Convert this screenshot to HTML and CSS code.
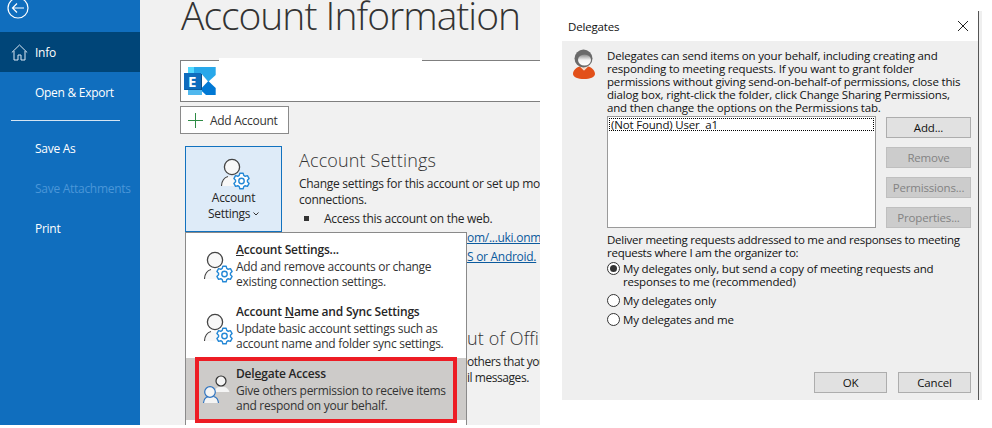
FILE: index.html
```html
<!DOCTYPE html>
<html lang="en">

<head>
    <meta charset="UTF-8">
    <title>Account Information and Delegates</title>
    <link rel="stylesheet" href="styles.css">
</head>

<body>
    <svg class="defs" width="0" height="0" aria-hidden="true">
        <symbol id="person-gear" viewBox="0 0 30 32">
            <path d="M.5 28c.3-5 2.700-8.500 6.500-9.500h6c2 .5 3 1.500 4 3V28z" fill="#f8f8f8" />
            <path d="M.5 28c.3-5 2.700-8.500 6.500-9.500" fill="none" stroke="#444" stroke-width="1.100" />
            <circle cx="11" cy="9" r="7.600" fill="#f8f8f8" stroke="#444" stroke-width="1.300" />
            <polygon transform="translate(20.500 23)" points="-2.250,-5.560 -1.660,-7.820 1.660,-7.820 2.250,-5.560 3.690,-4.730 5.950,-5.350 7.610,-2.470 5.940,-.84 5.940,.84 7.610,2.470 5.950,5.350 3.690,4.730 2.250,5.560 1.660,7.820 -1.660,7.820 -2.250,5.560 -3.690,4.730 -5.950,5.350 -7.610,2.470 -5.940,.84 -5.940,-.84 -7.610,-2.470 -5.950,-5.350 -3.690,-4.730" fill="#fff" stroke="#2488d6" stroke-width="1.400" stroke-linejoin="round" />
            <circle cx="20.500" cy="23" r="2.700" fill="none" stroke="#2488d6" stroke-width="1.400" />
        </symbol>
    </svg>

    <div class="page">
        <!-- Outlook backstage -->
        <div class="backstage">
            <nav class="sidebar">
                <div class="back">
                    <svg width="22" height="22" viewBox="0 0 22 22">
                        <circle cx="11" cy="11" r="10" fill="none" stroke="#fff" stroke-width="1.200" />
                        <path d="M17 11H5.500M10 6.500 5.500 11l4.500 4.500" fill="none" stroke="#fff" stroke-width="1.200" />
                    </svg>
                </div>
                <a class="nav-item active">
                    <svg class="home" width="17" height="17" viewBox="0 0 17 17">
                        <path d="M.8 8.500 8.500 1l7.700 7.500M3 7v9h4v-5h3v5h4V7" fill="none" stroke="#dce9f5" stroke-width="1" />
                    </svg>
                    Info
                </a>
                <a class="nav-item">Open &amp; Export</a>
                <div class="nav-line"></div>
                <a class="nav-item">Save As</a>
                <a class="nav-item disabled">Save Attachments</a>
                <a class="nav-item">Print</a>
            </nav>

            <main class="content">
                <h1>Account Information</h1>

                <div class="account-box">
                    <svg width="33" height="30" viewBox="0 0 33 30">
                        <path d="M4 0h14v7H4z" fill="#50d9ff" />
                        <path d="M10 0h8v8h-8z" fill="#28a8ea" />
                        <path d="M17.700 0h14v8l-7.400 6.700-6.600-7.700z" fill="#28a8ea" />
                        <path d="M24.300 14l7.400 7v7H22l-4.300-4V21z" fill="#0078d4" />
                        <path d="M4 22h14v6H4z" fill="#50b8ee" />
                        <path d="M0 6h17v17H0z" fill="#0f6cbd" />
                        <path d="M17 7h1v16H1v-.5h16z" fill="#0a4f86" />
                        <text x="4" y="20" class="exch-e">E</text>
                    </svg>
                </div>
                <div class="redact"></div>

                <button class="add-account">
                    <svg width="15" height="15" viewBox="0 0 15 15">
                        <path d="M7.500 0v15M0 7.500h15" stroke="#2e8b45" stroke-width="1" />
                    </svg>
                    Add Account
                </button>

                <section class="settings">
                    <div class="settings-tile">
                        <svg class="tile-icon" width="30" height="32"><use href="#person-gear" /></svg>
                        <span>Account<br>Settings <svg class="chevron" width="6" height="4" viewBox="0 0 6 4"><path d="M.5.5 3 3 5.500.5" fill="none" stroke="#333" stroke-width="1" /></svg></span>
                    </div>
                    <div class="settings-text">
                        <h2>Account Settings</h2>
                        <p>Change settings for this account or set up mo<br>connections.</p>
                        <ul>
                            <li>Access this account on the web.</li>
                        </ul>
                        <p class="peek link-one"><a>om/...uki.onm</a></p>
                        <p class="peek link-two"><a>S or Android.</a></p>
                    </div>
                </section>

                <section class="out-of-office">
                    <h2>ut of Offi</h2>
                    <p>others that you<br>il messages.</p>
                </section>

                <!-- Dropdown opened from the tile -->
                <div class="menu">
                    <div class="menu-item">
                        <svg width="30" height="32"><use href="#person-gear" /></svg>
                        <div>
                            <strong><u>A</u>ccount Settings...</strong>
                            <p>Add and remove accounts or change<br>existing connection settings.</p>
                        </div>
                    </div>
                    <div class="menu-item">
                        <svg width="30" height="32"><use href="#person-gear" /></svg>
                        <div>
                            <strong>Account <u>N</u>ame and Sync Settings</strong>
                            <p>Update basic account settings such as<br>account name and folder sync settings.</p>
                        </div>
                    </div>
                    <div class="menu-item hot">
                        <svg width="30" height="32" viewBox="0 0 30 32">
                            <path d="M10 17c1-3.500 3.500-5 5.500-5h4c3 0 5 2 6 5z" fill="#f4f4f4" />
                            <circle cx="17" cy="6" r="5" fill="#f4f4f4" stroke="#333" stroke-width="1.200" />
                            <path d="M-1 28c.3-4 2.500-6 5-6.500h5c2.500.5 4.700 2.500 5 6.500z" fill="#f4f4f4" />
                            <path d="M-.5 28c.3-4 2.500-6 5-6.500M9.500 21.500c2.500.5 4.700 2.500 5 6.500" fill="none" stroke="#2f74c0" stroke-width="1.200" />
                            <circle cx="6" cy="17" r="5.300" fill="#f4f4f4" stroke="#2f74c0" stroke-width="1.200" />
                        </svg>
                        <div>
                            <strong>Del<u>e</u>gate Access</strong>
                            <p>Give others permission to receive items<br>and respond on your behalf.</p>
                        </div>
                        <div class="red-box"></div>
                    </div>
                </div>
            </main>
        </div>

        <!-- Delegates dialog -->
        <div class="dialog">
            <div class="dialog-title">
                <span>Delegates</span>
                <svg width="12" height="12" viewBox="0 0 12 12">
                    <path d="M1 1l10 10M11 1 1 11" stroke="#222" stroke-width="1" />
                </svg>
            </div>
            <div class="dialog-body">
                <svg class="user-icon" width="24" height="32" viewBox="0 0 24 32">
                    <defs>
                        <linearGradient id="skin" x1="0" y1="0" x2="0" y2="1">
                            <stop offset="0" stop-color="#8a8a8a" />
                            <stop offset=".5" stop-color="#f2f2f2" />
                            <stop offset="1" stop-color="#fff" />
                        </linearGradient>
                    </defs>
                    <path d="M1 25c0-4 4-7 7-7.500l4 4 4-4c3 .5 7 3.500 7 7.500 0 3-5 5-11 5S1 28 1 25z" fill="#e2501a" />
                    <path d="M8 17.500l4 4 4-4-4-1z" fill="#f6d8c8" />
                    <circle cx="11.500" cy="9.500" r="9" fill="#6a6a6a" />
                    <ellipse cx="12.500" cy="11" rx="6.500" ry="5.500" fill="url(#skin)" />
                </svg>
                <div class="dialog-main">
                    <p class="intro">Delegates can send items on your behalf, including creating and<br>responding to meeting requests. If you want to grant folder<br>permissions without giving send-on-behalf-of permissions, close this<br>dialog box, right-click the folder, click Change Sharing Permissions,<br>and then change the options on the Permissions tab.</p>

                    <div class="picker">
                        <div class="listbox">
                            <div class="list-row">(Not Found) User&nbsp; a1</div>
                        </div>
                        <div class="picker-buttons">
                            <button class="btn">Add...</button>
                            <button class="btn off">Remove</button>
                            <button class="btn off">Permissions...</button>
                            <button class="btn off">Properties...</button>
                        </div>
                    </div>

                    <p class="deliver">Deliver meeting requests addressed to me and responses to meeting<br>requests where I am the organizer to:</p>

                    <div class="radio first"><i class="dot on"></i><span>My delegates only, but send a copy of meeting requests and<br>responses to me (recommended)</span></div>
                    <div class="radio"><i class="dot"></i><span>My delegates only</span></div>
                    <div class="radio"><i class="dot"></i><span>My delegates and me</span></div>
                </div>
                <div class="dialog-actions">
                    <button class="btn wide">OK</button>
                    <button class="btn wide">Cancel</button>
                </div>
            </div>
        </div>
    </div>
</body>

</html>
```

FILE: styles.css
```css
/* General reset */
* {
    margin: 0;
    padding: 0;
    box-sizing: border-box;
}

body {
    background: #fff;
    font-family: "Open Sans", "Noto Sans", sans-serif;
    width: 992px;
    height: 428px;
    overflow: hidden;
}

.defs {
    position: absolute;
}

.page {
    display: flex;
    align-items: flex-start;
}

/* Backstage */
.backstage {
    display: flex;
    width: 540px;
    height: 425px;
    flex-shrink: 0;
    font-size: 12px;
    letter-spacing: -0.28px;
}

.sidebar {
    width: 140px;
    background: #106ebe;
    color: #fff;
}

.back {
    height: 32px;
    padding-left: 7px;
    overflow: hidden;
}

.back svg {
    display: block;
    margin-top: -3px;
}

.nav-item {
    display: block;
    height: 40px;
    line-height: 42px;
    padding-left: 35px;
    position: relative;
}

.nav-item.active {
    background: #004578;
}

.nav-item.disabled {
    color: #4a96d8;
}

.home {
    position: absolute;
    left: 11px;
    top: 12px;
}

.nav-line {
    height: 1px;
    background: #d5e5f3;
    margin: 8px 20px 7px 11px;
}

/* Main area */
.content {
    width: 400px;
    background: #f1f1f1;
    position: relative;
    overflow: hidden;
    padding-left: 40px;
    color: #262626;
}

h1 {
    font-weight: 300;
    font-size: 39px;
    letter-spacing: -1px;
    line-height: 40px;
    margin: -5px 0 0 1px;
    height: 65px;
    white-space: nowrap;
    color: #333;
}

.account-box {
    height: 42px;
    background: #fff;
    border: 1px solid #7f7f7f;
    border-right: 0;
    padding-top: 6px;
    padding-left: 3px;
}

.account-box svg {
    display: block;
}

.exch-e {
    font-family: "Open Sans", sans-serif;
    font-size: 15px;
    font-weight: 700;
    fill: #fff;
}

/* white patch over the top of the account box */
.redact {
    position: absolute;
    left: 79px;
    top: 58px;
    width: 203px;
    height: 4px;
    background: #fff;
}

.add-account {
    display: flex;
    align-items: center;
    gap: 7px;
    width: 109px;
    height: 28px;
    margin-top: 4px;
    padding-left: 7px;
    background: #fff;
    border: 1px solid #8a8a8a;
    font: inherit;
    letter-spacing: inherit;
    color: #333;
    white-space: nowrap;
}

.settings {
    display: flex;
    margin: 12px 0 0 5px;
    height: 180px;
}

.settings-tile {
    width: 97px;
    height: 86px;
    background: #deebf8;
    border: 1px solid #1272bf;
    text-align: center;
    line-height: 16px;
    padding-top: 11px;
    flex-shrink: 0;
}

.tile-icon {
    display: block;
    margin-left: 35px;
}

.chevron {
    vertical-align: 2px;
}

.settings-text {
    margin: 2px 0 0 17px;
    white-space: nowrap;
    line-height: 16px;
}

h2 {
    font-weight: 300;
    font-size: 18px;
    letter-spacing: 0.15px;
    line-height: 24px;
    color: #333;
}

.settings-text h2 {
    margin-bottom: 4px;
}

.settings-text ul {
    list-style: none;
    margin-top: 3px;
    padding-left: 25px;
    position: relative;
}

.settings-text li::before {
    content: "";
    position: absolute;
    left: 5px;
    top: 5px;
    width: 5px;
    height: 5px;
    background: #333;
}

.settings-text a {
    color: #0b5a9d;
    text-decoration: underline;
}

/* what shows of the links beside the open menu */
.peek {
    margin-left: 168px;
}

.link-one {
    margin-top: 3px;
}

.link-two {
    margin-top: 3px;
}

.out-of-office {
    margin-left: 287px;
    white-space: nowrap;
    line-height: 16px;
}

.out-of-office h2 {
    margin-bottom: 4px;
}

.out-of-office p {
    letter-spacing: -0.45px;
}

/* Dropdown menu */
.menu {
    position: absolute;
    left: 45px;
    top: 232px;
    width: 282px;
    height: 196px;
    background: #fff;
    border: 1px solid #8a8a8a;
    padding-top: 1px;
    line-height: 15px;
}

.menu-item {
    display: flex;
    height: 62px;
    padding: 8px 0 0 18px;
    gap: 2px;
    position: relative;
    white-space: nowrap;
}

.menu-item svg {
    margin-top: 9px;
    flex-shrink: 0;
    overflow: visible;
}

.menu-item strong {
    display: block;
    font-weight: 600;
    letter-spacing: -0.2px;
    margin-bottom: 2px;
}

.menu-item.hot {
    background: #cdcbc9;
}

.menu-item p {
    color: #333;
}

.red-box {
    position: absolute;
    left: 9px;
    right: 9px;
    top: -1px;
    height: 66px;
    border: 4px solid #ed1c24;
}

/* Delegates dialog */
.dialog {
    margin: 11px 0 0 22px;
    width: 420px;
    height: 389px;
    font-size: 11.5px;
    letter-spacing: -0.18px;
    color: #111;
    border-right: 3px solid #efefef;
    line-height: 13px;
}

.dialog-title {
    height: 30px;
    display: flex;
    justify-content: space-between;
    align-items: center;
    padding: 0 9px 0 6px;
    background: #fff;
    border-right: 1px solid #555;
}

.dialog-body {
    height: 359px;
    background: #efefef;
    border-right: 1px solid #555;
    position: relative;
    display: flex;
    padding: 8px 7px 0 10px;
}

.user-icon {
    flex-shrink: 0;
    margin-right: 11px;
}

.dialog-main {
    white-space: nowrap;
    flex: 1;
}

.picker {
    display: flex;
    gap: 10px;
    margin-top: 2px;
}

.listbox {
    width: 269px;
    height: 112px;
    background: #fff;
    border: 1px solid #9a9a9a;
    padding: 1px;
}

.list-row {
    height: 13px;
    border: 1px dotted #000;
    line-height: 11px;
    padding-left: 1px;
}

.picker-buttons {
    display: flex;
    flex-direction: column;
    gap: 9px;
    margin-top: 1px;
}

.btn {
    width: 85px;
    height: 21px;
    background: #e1e1e1;
    border: 1px solid #adadad;
    font: inherit;
    letter-spacing: inherit;
    color: #111;
}

.btn.off {
    background: #ccc;
    border-color: #bfbfbf;
    color: #838383;
}

.deliver {
    margin-top: 5px;
    letter-spacing: -0.26px;
}

.radio {
    display: flex;
    gap: 3px;
    margin-top: 6px;
}

.radio.first {
    margin-top: 3px;
}

.dot {
    width: 13px;
    height: 13px;
    border: 1px solid #333;
    border-radius: 50%;
    background: #fff;
    flex-shrink: 0;
    position: relative;
}

.dot.on::after {
    content: "";
    position: absolute;
    left: 2px;
    top: 2px;
    width: 7px;
    height: 7px;
    border-radius: 50%;
    background: #333;
}

.dialog-actions {
    position: absolute;
    right: 7px;
    bottom: 7px;
    display: flex;
    gap: 11px;
}

.btn.wide {
    width: 73px;
}
```
